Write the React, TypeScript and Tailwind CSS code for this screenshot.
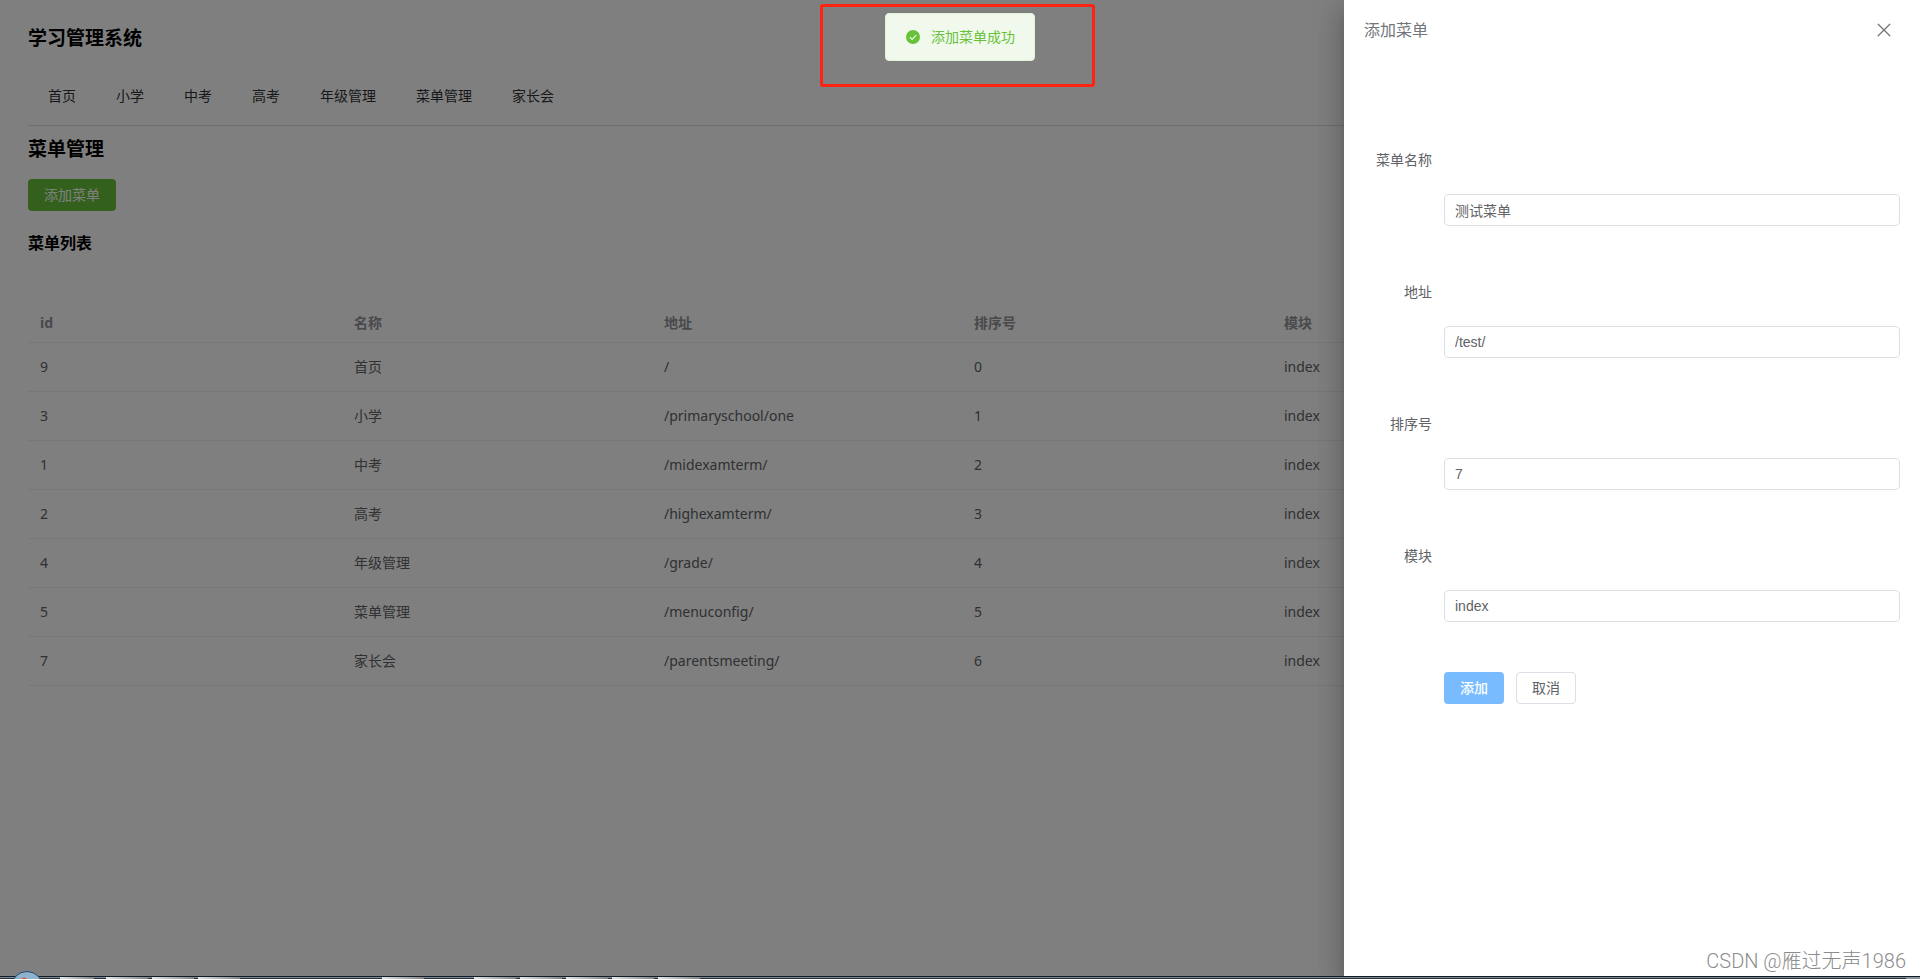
import { useState } from "react";

const navItems = ["首页", "小学", "中考", "高考", "年级管理", "菜单管理", "家长会"];

const columns = ["id", "名称", "地址", "排序号", "模块", "操作"];

const rows = [
  [9, "首页", "/", 0, "index"],
  [3, "小学", "/primaryschool/one", 1, "index"],
  [1, "中考", "/midexamterm/", 2, "index"],
  [2, "高考", "/highexamterm/", 3, "index"],
  [4, "年级管理", "/grade/", 4, "index"],
  [5, "菜单管理", "/menuconfig/", 5, "index"],
  [7, "家长会", "/parentsmeeting/", 6, "index"],
];

const fields = [
  { id: "name", label: "菜单名称", value: "测试菜单" },
  { id: "path", label: "地址", value: "/test/" },
  { id: "order", label: "排序号", value: "7" },
  { id: "module", label: "模块", value: "index" },
];

const taskButtons = [
  { left: 60, width: 34 },
  { left: 106, width: 42 },
  { left: 152, width: 42 },
  { left: 198, width: 42 },
  { left: 382, width: 42 },
  { left: 474, width: 42 },
  { left: 520, width: 42 },
  { left: 566, width: 42 },
  { left: 612, width: 42 },
  { left: 658, width: 42 },
];

function Page() {
  return (
    <main className="flex-1 px-7 pt-6">
      <h1 className="text-[19px] leading-7 font-bold text-black">学习管理系统</h1>
      <nav className="mt-3.5 flex h-[59px] items-center">
        {navItems.map((item) => (
          <a key={item} href="#" className="px-5 text-sm leading-5 text-[#303133]">
            {item}
          </a>
        ))}
      </nav>
      <hr className="border-t border-[#dcdfe6]" />
      <h2 className="mt-[9px] text-[19px] leading-7 font-bold text-black">菜单管理</h2>
      <button
        type="button"
        className="mt-4 flex h-8 items-center rounded bg-[#67c23a] px-4 text-sm text-white"
      >
        添加菜单
      </button>
      <h3 className="mt-5 text-base leading-6 font-bold text-black">菜单列表</h3>
      <table className="mt-12 w-full table-fixed border-collapse text-left text-sm leading-[23px] text-[#606266]">
        <thead>
          <tr className="h-[39px] border-b border-[#ebeef5] text-[#909399]">
            {columns.map((column) => (
              <th key={column} scope="col" className="px-3 font-bold first:w-[314px]">
                {column}
              </th>
            ))}
          </tr>
        </thead>
        <tbody>
          {rows.map((row) => (
            <tr key={row[0]} className="h-[49px] border-b border-[#ebeef5]">
              {row.map((cell, index) => (
                <td key={index} className="px-3">
                  {cell}
                </td>
              ))}
              <td className="px-3" />
            </tr>
          ))}
        </tbody>
      </table>
    </main>
  );
}

function Drawer() {
  const [values, setValues] = useState(fields.map((field) => field.value));

  return (
    <aside
      role="dialog"
      aria-labelledby="drawer-title"
      className="w-[30%] bg-white shadow-[0_8px_10px_-5px_rgba(0,0,0,0.2),0_16px_24px_2px_rgba(0,0,0,0.14),0_6px_30px_5px_rgba(0,0,0,0.12)]"
    >
      <header className="flex items-center justify-between px-5 pt-5 text-[#72767b]">
        <h2 id="drawer-title" className="text-base leading-5">
          添加菜单
        </h2>
        <button type="button" aria-label="关闭" className="mr-1.5 flex">
          <svg viewBox="0 0 20 20" className="size-5" fill="none" stroke="currentColor" strokeWidth="1.3" strokeLinecap="round">
            <path d="M4.2 4.2l11.6 11.6M15.8 4.2L4.2 15.8" />
          </svg>
        </button>
      </header>
      <form className="px-5 pt-[104px] text-sm text-[#606266]" onSubmit={(event) => event.preventDefault()}>
        {fields.map((field, index) => (
          <div key={field.id} className="h-[132px]">
            <label htmlFor={field.id} className="block w-20 pr-3 text-right leading-8">
              {field.label}
            </label>
            <input
              id={field.id}
              value={values[index]}
              onChange={(event) => setValues(values.map((v, i) => (i === index ? event.target.value : v)))}
              className="mt-[18px] ml-20 block h-8 w-[calc(100%-80px)] rounded border border-[#dcdfe6] bg-white px-2.5 font-['Liberation_Sans','Noto_Sans_CJK_SC',sans-serif] outline-none"
            />
          </div>
        ))}
        <div className="ml-20 flex gap-3">
          <button type="submit" className="h-8 rounded bg-[#79bbff] px-4 font-medium text-white">
            添加
          </button>
          <button type="button" className="h-8 rounded border border-[#dcdfe6] bg-white px-[15px]">
            取消
          </button>
        </div>
      </form>
    </aside>
  );
}

function Toast() {
  return (
    <div className="absolute top-1 left-1/2 flex h-[83px] w-[275px] -translate-x-[140px] rounded-[3px] border-[3px] border-[#ff2412] pt-1.5 pl-[62px]">
      <div
        role="status"
        className="flex h-12 w-[150px] items-center gap-[11px] rounded border border-[#e1f3d8] bg-[#f0f9eb] pl-5 text-sm text-[#67c23a]"
      >
        <svg viewBox="0 0 14 14" className="size-3.5">
          <circle cx="7" cy="7" r="7" fill="#67c23a" />
          <path d="M3.9 7.2l2.2 2.2 4.1-4.2" fill="none" stroke="#f0f9eb" strokeWidth="1.1" />
        </svg>
        添加菜单成功
      </div>
    </div>
  );
}

function Taskbar() {
  return (
    <footer className="relative h-[3px] border-t border-[#131b24] bg-[#27333e]">
      <div className="h-px bg-[#7d8994]" />
      {taskButtons.map((button) => (
        <div
          key={button.left}
          className="absolute top-0 h-0.5 bg-linear-to-r from-[#e4e4e4] to-[#858585]"
          style={{ left: button.left, width: button.width }}
        />
      ))}
      <div className="absolute top-0 right-0 h-0.5 w-3.5 bg-[#8a949c]" />
      <svg viewBox="0 0 30 8" className="absolute bottom-0 left-3 h-2 w-[30px]">
        <circle cx="15" cy="16" r="15.5" fill="#8fb3cc" stroke="#1f4a70" />
        <path d="M9 8q3-3 6 0z" fill="#d9532c" />
      </svg>
    </footer>
  );
}

export default function App() {
  return (
    <div className="relative flex min-h-screen flex-col overflow-hidden bg-white font-['Noto_Sans','Noto_Sans_CJK_SC',sans-serif]">
      <Page />
      <div className="absolute inset-x-0 top-0 bottom-[3px] flex justify-end overflow-hidden bg-black/50">
        <Drawer />
      </div>
      <Toast />
      <Taskbar />
      <p className="absolute right-3.5 bottom-1.5 font-['Roboto','Noto_Sans_CJK_SC',sans-serif] text-xl leading-6 font-light text-[#8c8c8c]">
        CSDN @雁过无声1986
      </p>
    </div>
  );
}
